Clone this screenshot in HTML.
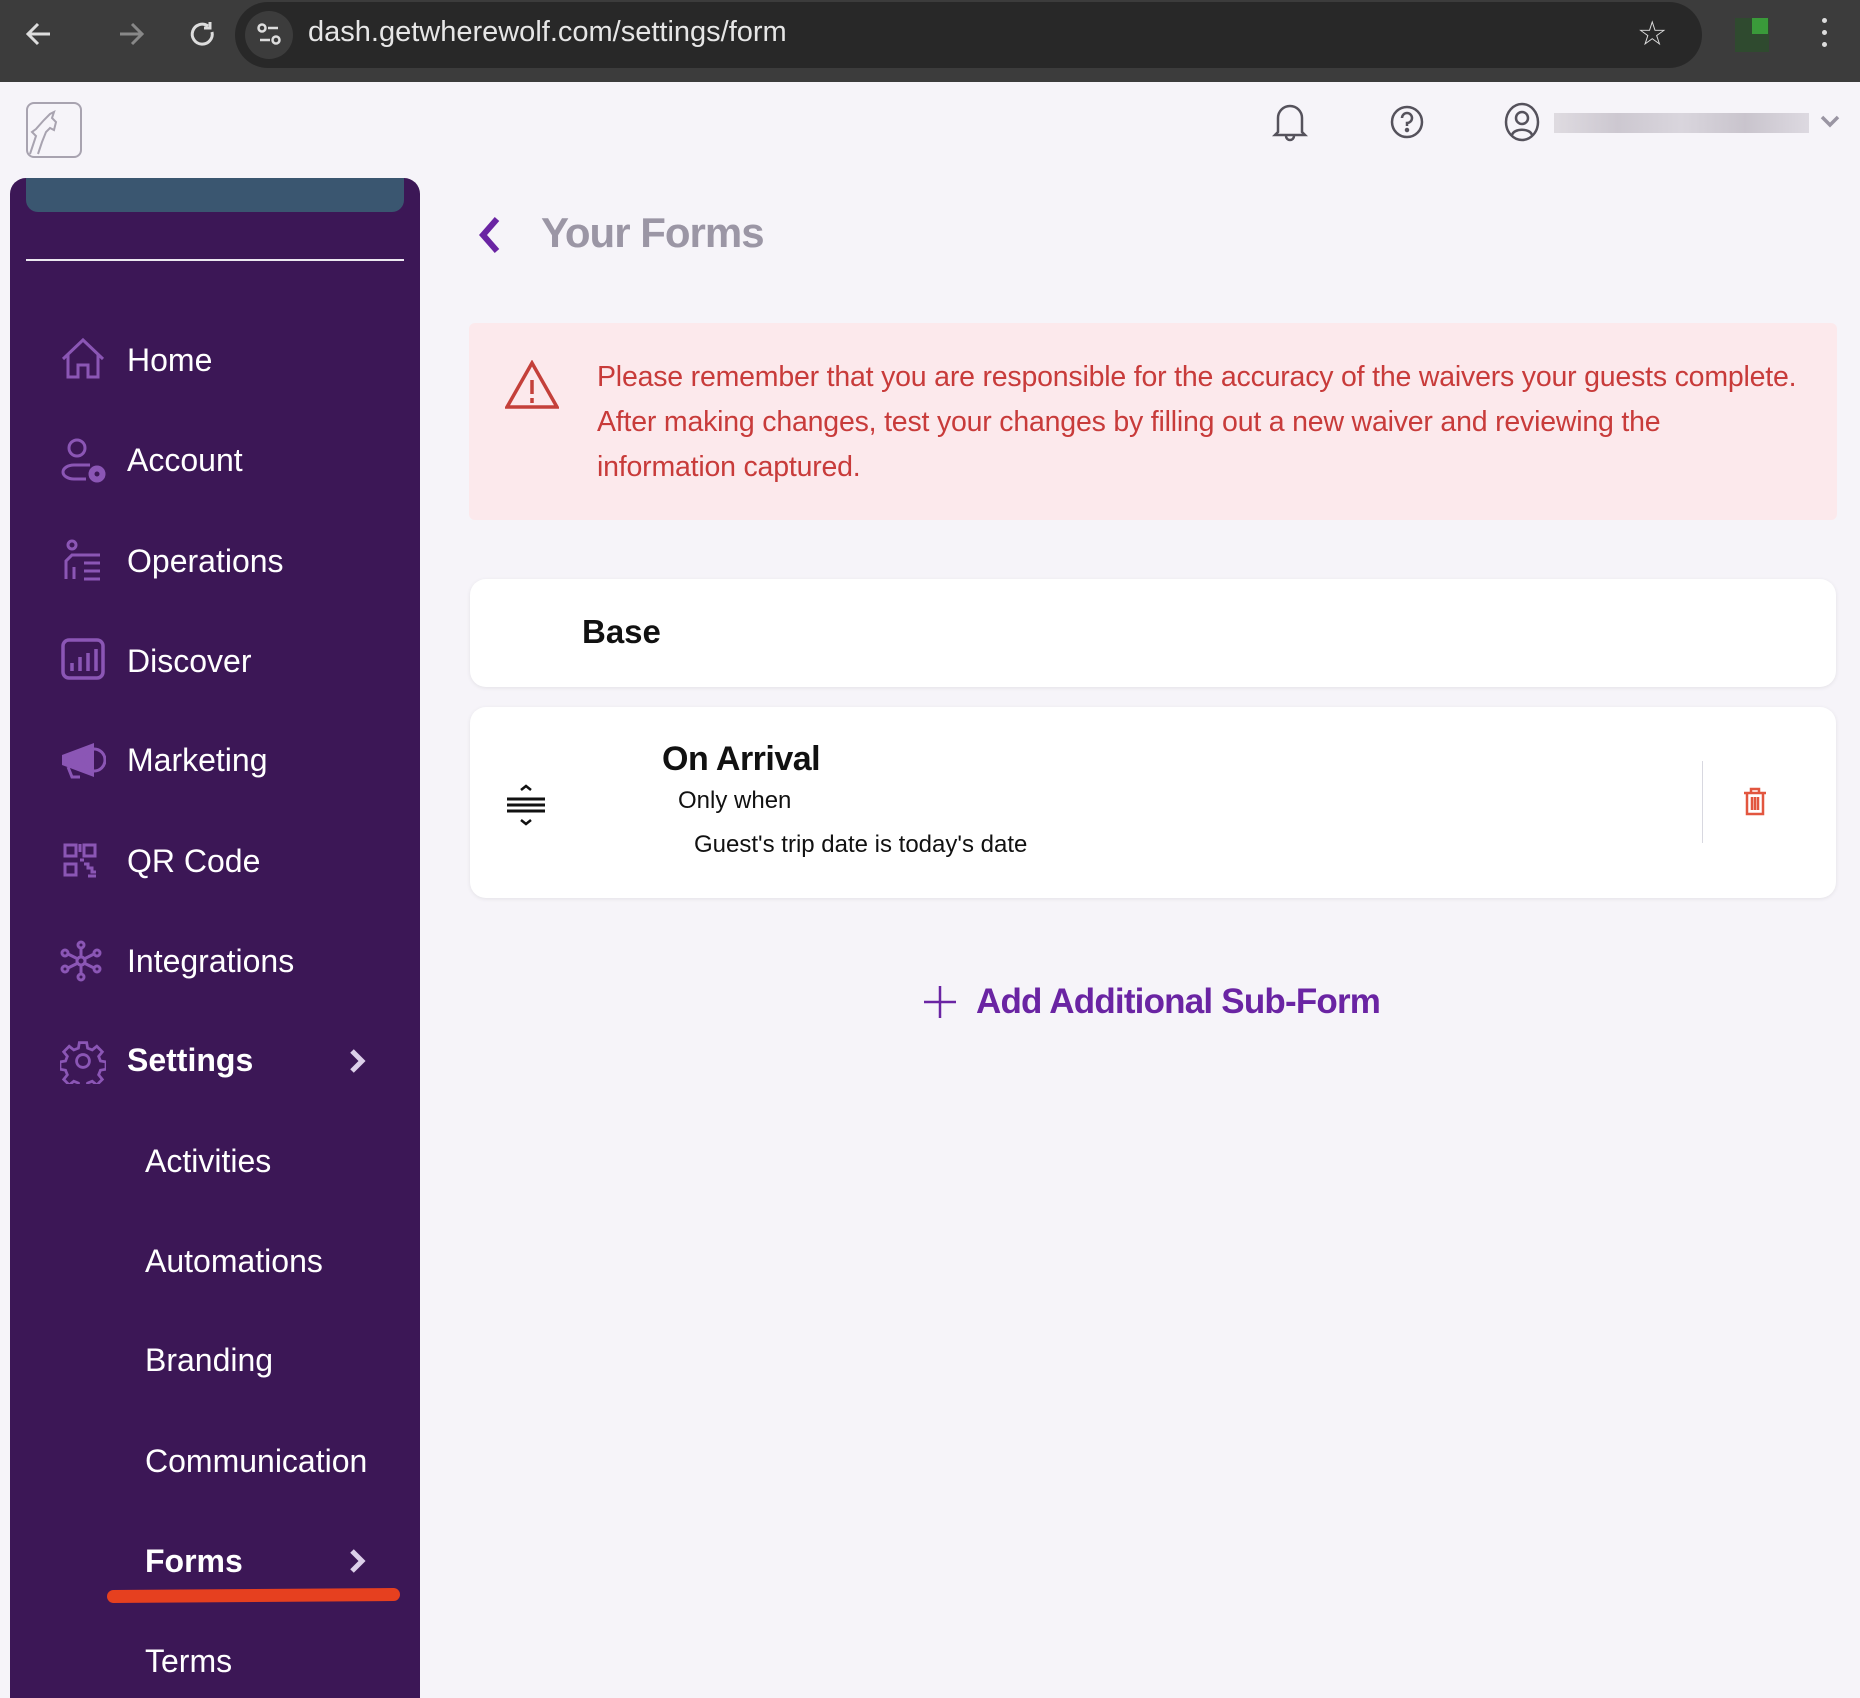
<!DOCTYPE html>
<html><head><meta charset="utf-8"><style>
*{margin:0;padding:0;box-sizing:border-box}
body{width:1860px;height:1690px;background:#f6f4f9;font-family:"Liberation Sans",sans-serif;position:relative;overflow:hidden}
.a{position:absolute;white-space:nowrap}
.nav{position:absolute;left:127px;color:#fff;font-size:32px;line-height:40px}
.sub{left:145px}
.ic{position:absolute;left:60px}
</style></head><body>
<div class="a" style="left:0;top:0;width:1860px;height:82px;background:#3c3c3c"></div>
<div class="a" style="left:235px;top:2px;width:1467px;height:66px;background:#282828;border-radius:33px"></div>
<div class="a" style="left:245px;top:11px;width:48px;height:48px;background:#3c3c3c;border-radius:24px"></div>
<svg class="a" style="left:20px;top:16px" width="230" height="36" viewBox="0 0 230 36" fill="none" stroke="#ddd" stroke-width="3"><path d="M30 18H8M18 8L8 18l10 10"/><path d="M100 18h22M112 8l10 10-10 10" stroke="#888"/><path d="M188 10a10 10 0 1 0 4 6M190 6v6h-6"/></svg>
<svg class="a" style="left:256px;top:22px" width="26" height="26" fill="none" stroke="#ddd" stroke-width="2.5"><circle cx="6" cy="6" r="3.5"/><path d="M12 6h10M4 18h10"/><circle cx="20" cy="18" r="3.5"/></svg>
<div class="a" style="left:308px;top:16px;font-size:29px;color:#e6e6e6">dash.getwherewolf.com/settings/form</div>
<div class="a" style="left:1637px;top:14px;font-size:34px;color:#ddd">☆</div>
<div class="a" style="left:1735px;top:18px;width:34px;height:34px;background:#2f4a2f"></div>
<div class="a" style="left:1752px;top:18px;width:16px;height:16px;background:#3a9a3a"></div>
<div class="a" style="left:1822px;top:18px;width:5px;height:5px;border-radius:3px;background:#ddd;box-shadow:0 12px 0 #ddd,0 24px 0 #ddd"></div>
<svg class="a" style="left:26px;top:102px" width="56" height="56" fill="none" stroke="#a8a3b0" stroke-width="2"><rect x="1" y="1" width="54" height="54" rx="7"/><path d="M4 52L10 34 6 30 10 27 18 18 24 12 28 10 26 16 30 20 28 28 24 26 20 30 16 40 12 52"/></svg>
<svg class="a" style="left:1270px;top:100px" width="40" height="44" fill="none" stroke="#55525c" stroke-width="2.5"><path d="M8 32V18a12 12 0 0 1 24 0v14l3 3H5z"/><path d="M16 36a4 4 0 0 0 8 0"/></svg>
<svg class="a" style="left:1389px;top:104px" width="36" height="36" fill="none" stroke="#55525c" stroke-width="2.5"><circle cx="18" cy="18" r="15"/><path d="M13 14a5 5 0 1 1 5 5v3"/><circle cx="18" cy="26" r="1" fill="#55525c"/></svg>
<svg class="a" style="left:1503px;top:102px" width="38" height="40" fill="none" stroke="#55525c" stroke-width="2.5"><ellipse cx="19" cy="20" rx="16" ry="18"/><circle cx="19" cy="16" r="6"/><path d="M9 33c2-7 18-7 20 0"/></svg>
<div class="a" style="left:1554px;top:113px;width:255px;height:20px;background:linear-gradient(90deg,#dcd8de,#c8c3cc,#d6d2da,#c4bfc8,#dad6de);opacity:.9"></div>
<svg class="a" style="left:1820px;top:114px" width="20" height="14" fill="none" stroke="#9a95a3" stroke-width="3.5"><path d="M2 3l8 8 8-8"/></svg>
<div class="a" style="left:10px;top:178px;width:410px;height:1520px;background:#3c1756;border-radius:16px 16px 0 0"></div>
<div class="a" style="left:26px;top:178px;width:378px;height:34px;background:#3a5670;border-radius:0 0 12px 12px"></div>
<div class="a" style="left:26px;top:259px;width:378px;height:2px;background:#ece8f0"></div>
<svg class="ic" style="top:337px" width="46" height="44" fill="none" stroke="#8b56b5" stroke-width="3"><path d="M3 22L23 3l20 19M8 18v22h10V28h10v12h10V18"/></svg>
<svg class="ic" style="top:437px" width="50" height="50" fill="none" stroke="#8b56b5" stroke-width="3"><circle cx="17" cy="11" r="8"/><path d="M30 28H14a11 7 0 0 0 0 14h12"/><circle cx="37" cy="37" r="7" fill="#8b56b5"/><circle cx="37" cy="37" r="2.5" fill="#3c1756" stroke="none"/></svg>
<svg class="ic" style="top:539px" width="44" height="44" fill="none" stroke="#8b56b5" stroke-width="3"><circle cx="12" cy="6" r="4"/><path d="M6 40V22l6-6h12M14 40V28M24 16h16M24 24h16M24 32h16M24 40h16"/></svg>
<svg class="ic" style="top:637px" width="48" height="44" fill="none" stroke="#8b56b5" stroke-width="3.5"><rect x="3" y="3" width="40" height="38" rx="6"/><path d="M12 34v-8M20 34V20M28 34V16M36 34V12"/></svg>
<svg class="ic" style="top:737px" width="46" height="46" fill="#8b56b5"><path d="M2 18L34 6v34L2 28z"/><circle cx="34" cy="23" r="11" fill="none" stroke="#8b56b5" stroke-width="3"/><path d="M8 30l4 10h8" stroke="#8b56b5" stroke-width="3" fill="none"/></svg>
<svg class="ic" style="top:840px" width="40" height="40" fill="none" stroke="#8b56b5" stroke-width="3"><rect x="5" y="5" width="11" height="11"/><rect x="24" y="5" width="11" height="11"/><rect x="5" y="24" width="11" height="11"/><path d="M24 24h4v4h4v4h4M28 36h8M20 4v8M20 20h4"/></svg>
<svg class="ic" style="top:940px" width="42" height="42" fill="none" stroke="#8b56b5" stroke-width="3"><circle cx="21" cy="21" r="4"/><circle cx="21" cy="5" r="3"/><circle cx="21" cy="37" r="3"/><circle cx="5" cy="13" r="3"/><circle cx="37" cy="13" r="3"/><circle cx="5" cy="29" r="3"/><circle cx="37" cy="29" r="3"/><path d="M21 8v9M21 25v9M8 14l10 5M34 14l-10 5M8 28l10-5M34 28l-10-5"/></svg>
<svg class="ic" style="top:1038px" width="46" height="46" viewBox="-2 -2 50 50" fill="none" stroke="#8b56b5" stroke-width="3"><path d="M19 3h8l1 6 5 2 5-4 6 6-4 5 2 5 6 1v8l-6 1-2 5 4 5-6 6-5-4-5 2-1 6h-8l-1-6-5-2-5 4-6-6 4-5-2-5-6-1v-8l6-1 2-5-4-5 6-6 5 4 5-2z"/><circle cx="23" cy="23" r="7"/></svg>
<div class="nav" style="top:340px">Home</div>
<div class="nav" style="top:440px">Account</div>
<div class="nav" style="top:541px">Operations</div>
<div class="nav" style="top:641px">Discover</div>
<div class="nav" style="top:740px">Marketing</div>
<div class="nav" style="top:841px">QR Code</div>
<div class="nav" style="top:941px">Integrations</div>
<div class="nav" style="top:1040px;font-weight:bold">Settings</div>
<svg class="a" style="left:348px;top:1048px" width="20" height="26" fill="none" stroke="#ddd0ea" stroke-width="5"><path d="M4 3l10 10-10 10"/></svg>
<div class="nav sub" style="top:1141px">Activities</div>
<div class="nav sub" style="top:1241px">Automations</div>
<div class="nav sub" style="top:1340px">Branding</div>
<div class="nav sub" style="top:1441px">Communication</div>
<div class="nav sub" style="top:1541px;font-weight:bold">Forms</div>
<svg class="a" style="left:348px;top:1548px" width="20" height="26" fill="none" stroke="#ddd0ea" stroke-width="5"><path d="M4 3l10 10-10 10"/></svg>
<div class="a" style="left:107px;top:1589px;width:293px;height:13px;background:#e6401f;border-radius:7px;transform:rotate(-0.4deg)"></div>
<div class="nav sub" style="top:1641px">Terms</div>
<svg class="a" style="left:475px;top:216px" width="30" height="38" fill="none" stroke="#6a24a3" stroke-width="6"><path d="M22 3L8 19l14 16"/></svg>
<div class="a" style="left:541px;top:209px;font-size:42px;font-weight:bold;color:#9b96a5;letter-spacing:-1px">Your Forms</div>
<div class="a" style="left:469px;top:323px;width:1368px;height:197px;background:#fce9ec;border-radius:6px"></div>
<svg class="a" style="left:505px;top:360px" width="54" height="50" fill="none" stroke="#c4403a" stroke-width="3.5"><path d="M27 3L2 47h50z"/><path d="M27 20v14M27 38v5"/></svg>
<div class="a" style="left:597px;top:355px;font-size:28.5px;line-height:45px;color:#c83b3a;letter-spacing:-0.2px">Please remember that you are responsible for the accuracy of the waivers your guests complete.<br>After making changes, test your changes by filling out a new waiver and reviewing the<br>information captured.</div>
<div class="a" style="left:470px;top:579px;width:1366px;height:108px;background:#fff;border-radius:16px;box-shadow:0 1px 4px rgba(0,0,0,.08)"></div>
<div class="a" style="left:582px;top:613px;font-size:33px;font-weight:bold;color:#111">Base</div>
<div class="a" style="left:470px;top:707px;width:1366px;height:191px;background:#fff;border-radius:16px;box-shadow:0 1px 4px rgba(0,0,0,.08)"></div>
<div class="a" style="left:662px;top:740px;font-size:34px;font-weight:bold;color:#111;letter-spacing:-0.5px">On Arrival</div>
<div class="a" style="left:678px;top:787px;font-size:24px;color:#111">Only when</div>
<div class="a" style="left:694px;top:831px;font-size:24px;color:#111">Guest's trip date is today's date</div>
<svg class="a" style="left:505px;top:783px" width="42" height="44" fill="none" stroke="#111" stroke-width="3"><path d="M2 16h38M2 22h38M2 28h38"/><path d="M16 7l5-4 5 4M16 37l5 4 5-4" stroke-width="2.5"/></svg>
<div class="a" style="left:1702px;top:761px;width:1px;height:82px;background:#d8d8e0"></div>
<svg class="a" style="left:1742px;top:787px" width="26" height="30" fill="none" stroke="#e2563f" stroke-width="2.5"><path d="M2 6h22M9 6V2h8v4M5 6v21h16V6M10 10v13M13 10v13M16 10v13"/></svg>
<svg class="a" style="left:922px;top:984px" width="36" height="36" fill="none" stroke="#6a24a3" stroke-width="2.5"><path d="M18 2v32M2 18h32"/></svg>
<div class="a" style="left:976px;top:982px;font-size:35px;font-weight:bold;color:#6a24a3;letter-spacing:-0.8px">Add Additional Sub-Form</div>
</body></html>
